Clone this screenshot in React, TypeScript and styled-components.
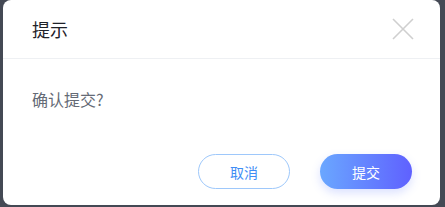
import React from 'react';
import styled, { createGlobalStyle } from 'styled-components';

const GlobalStyle = createGlobalStyle`
  html, body {
    margin: 0;
    padding: 0;
    background: #444954;
    font-family: "Noto Sans CJK SC", "Noto Sans", sans-serif;
  }
`;

const Page = styled.div`
  width: 445px;
  height: 207px;
  padding-left: 3px;
  box-sizing: border-box;
`;

const Dialog = styled.div`
  width: 437px;
  height: 205px;
  background: #fff;
  border-radius: 8px;
  display: flex;
  flex-direction: column;
  overflow: hidden;
`;

const Header = styled.div`
  height: 58px;
  display: flex;
  align-items: center;
  justify-content: space-between;
  padding: 0 26px 0 29px;
  border-bottom: 1px solid #eef0f3;
`;

const Title = styled.h2`
  margin: 0;
  font-size: 18px;
  font-weight: 400;
  color: #1f2229;
  line-height: 24px;
`;

const Close = styled.button`
  width: 22px;
  height: 22px;
  padding: 0;
  border: 0;
  background: none;
  cursor: pointer;
  display: flex;
  align-items: center;
  justify-content: center;
`;

const Body = styled.div`
  padding: 28px 29px 0;
  font-size: 16px;
  line-height: 24px;
  color: #646a75;
  flex: 1;
`;

const Footer = styled.div`
  display: flex;
  justify-content: flex-end;
  gap: 30px;
  padding: 0 28px 16px 0;
`;

const Button = styled.button<{ $primary?: boolean }>`
  width: 92px;
  height: 35px;
  border-radius: 18px;
  font-family: inherit;
  font-size: 14px;
  cursor: pointer;
  box-sizing: border-box;
  border: ${(p) => (p.$primary ? '0' : '1px solid #9ec8fb')};
  color: ${(p) => (p.$primary ? '#fff' : '#3f8ef5')};
  background: ${(p) =>
    p.$primary ? 'linear-gradient(90deg, #6aa7ff 0%, #5f61ff 100%)' : '#fff'};
  box-shadow: ${(p) => (p.$primary ? '0 4px 10px rgba(92, 120, 255, 0.22)' : 'none')};
`;

export default function App() {
  return (
    <>
      <GlobalStyle />
      <Page>
        <Dialog>
          <Header>
            <Title>提示</Title>
            <Close aria-label="关闭">
              <svg width="22" height="22" viewBox="0 0 22 22">
                <path d="M1 1L21 21M21 1L1 21" stroke="#cfcfcf" strokeWidth="1.6" />
              </svg>
            </Close>
          </Header>
          <Body>确认提交?</Body>
          <Footer>
            <Button>取消</Button>
            <Button $primary>提交</Button>
          </Footer>
        </Dialog>
      </Page>
    </>
  );
}
